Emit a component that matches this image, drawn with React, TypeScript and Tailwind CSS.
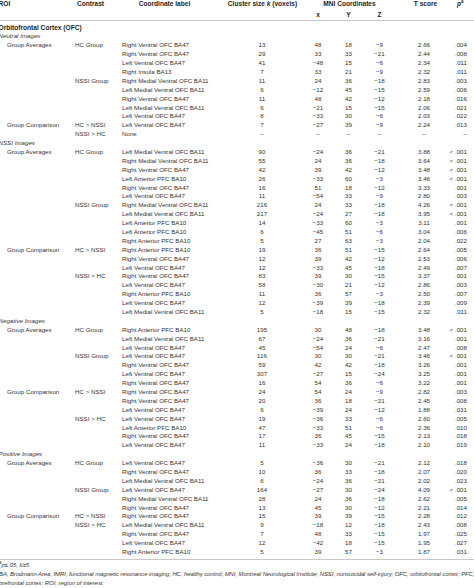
import React from "react";

type R = [string, string, string, string, string, string, string];
type Contrast = { name: string; rows: R[] };
type Group = { roi: string; contrasts: Contrast[] };
type Section = { title: string; groups: Group[] };

const M = "\u2212";

const sections: Section[] = [
  {
    title: "Neutral Images",
    groups: [
      {
        roi: "Group Averages",
        contrasts: [
          {
            name: "HC Group",
            rows: [
              ["Right Ventral OFC BA47", "13", "48", "18", M + "9", "2.66", ".004"],
              ["Right Ventral OFC BA47", "29", "33", "33", M + "21", "2.44", ".008"],
              ["Left Ventral OFC BA47", "41", M + "48", "15", M + "6", "2.34", ".011"],
              ["Right Insula BA13", "7", "33", "21", M + "9", "2.32", ".011"],
            ],
          },
          {
            name: "NSSI Group",
            rows: [
              ["Right Medial Ventral OFC BA11", "11", "24", "36", M + "18", "2.83", ".003"],
              ["Left Medial Ventral OFC BA11", "6", M + "12", "45", M + "15", "2.59", ".006"],
              ["Right Ventral OFC BA47", "11", "48", "42", M + "12", "2.18", ".016"],
              ["Left Medial Ventral OFC BA11", "6", M + "21", "15", M + "15", "2.06", ".021"],
              ["Left Ventral OFC BA47", "8", M + "33", "30", M + "6", "2.03", ".022"],
            ],
          },
        ],
      },
      {
        roi: "Group Comparison",
        contrasts: [
          { name: "HC > NSSI", rows: [["Left Ventral OFC BA47", "7", M + "27", "39", M + "9", "2.24", ".013"]] },
          { name: "NSSI > HC", rows: [["None", "\u2013", "\u2013", "\u2013", "\u2013", "\u2013", "\u2013"]] },
        ],
      },
    ],
  },
  {
    title: "NSSI Images",
    groups: [
      {
        roi: "Group Averages",
        contrasts: [
          {
            name: "HC Group",
            rows: [
              ["Left Medial Ventral OFC BA11", "90", M + "24", "36", M + "21", "3.88", "< .001"],
              ["Right Medial Ventral OFC BA11", "55", "24", "36", M + "18", "3.64", "< .001"],
              ["Right Ventral OFC BA47", "42", "39", "42", M + "12", "3.48", "< .001"],
              ["Left Anterior PFC BA10", "26", M + "33", "60", M + "3", "3.46", "< .001"],
              ["Right Ventral OFC BA47", "16", "51", "18", M + "12", "3.33", ".001"],
              ["Left Ventral OFC BA47", "11", M + "54", "33", M + "9", "2.80", ".003"],
            ],
          },
          {
            name: "NSSI Group",
            rows: [
              ["Right Medial Ventral OFC BA11", "216", "24", "33", M + "18", "4.26", "< .001"],
              ["Left Medial Ventral OFC BA11", "217", M + "24", "27", M + "18", "3.95", "< .001"],
              ["Left Anterior PFC BA10", "14", M + "33", "60", M + "3", "3.11", ".001"],
              ["Left Anterior PFC BA10", "6", M + "45", "51", M + "6", "3.04", ".006"],
              ["Right Anterior PFC BA10", "5", "27", "63", M + "3", "2.04", ".022"],
            ],
          },
        ],
      },
      {
        roi: "Group Comparison",
        contrasts: [
          {
            name: "HC > NSSI",
            rows: [
              ["Right Anterior PFC BA10", "19", "36", "51", M + "15", "2.64", ".005"],
              ["Right Ventral OFC BA47", "12", "39", "42", M + "12", "2.53", ".006"],
              ["Left Ventral OFC BA47", "12", M + "33", "45", M + "18", "2.49", ".007"],
            ],
          },
          {
            name: "NSSI > HC",
            rows: [
              ["Right Ventral OFC BA47", "83", "39", "30", M + "15", "3.37", ".001"],
              ["Left Ventral OFC BA47", "58", M + "30", "21", M + "12", "2.86", ".003"],
              ["Right Anterior PFC BA10", "11", "36", "57", M + "3", "2.50", ".007"],
              ["Left Ventral OFC BA47", "12", M + "39", "39", M + "18", "2.39", ".009"],
              ["Left Medial Ventral OFC BA11", "5", M + "18", "15", M + "15", "2.32", ".011"],
            ],
          },
        ],
      },
    ],
  },
  {
    title: "Negative Images",
    groups: [
      {
        roi: "Group Averages",
        contrasts: [
          {
            name: "HC Group",
            rows: [
              ["Right Anterior PFC BA10", "195", "30", "48", M + "18", "3.48", "< .001"],
              ["Left Medial Ventral OFC BA11", "67", M + "24", "36", M + "21", "3.16", ".001"],
              ["Left Ventral OFC BA47", "45", M + "54", "24", M + "6", "2.47", ".008"],
            ],
          },
          {
            name: "NSSI Group",
            rows: [
              ["Left Ventral OFC BA47", "116", "30", "30", M + "21", "3.46", "< .001"],
              ["Right Ventral OFC BA47", "59", "42", "42", M + "18", "3.26", ".001"],
              ["Left Ventral OFC BA47", "307", M + "27", "15", M + "24", "3.25", ".001"],
              ["Right Ventral OFC BA47", "16", "54", "36", M + "6", "3.22", ".001"],
            ],
          },
        ],
      },
      {
        roi: "Group Comparison",
        contrasts: [
          {
            name: "HC > NSSI",
            rows: [
              ["Right Ventral OFC BA47", "24", "54", "24", M + "9", "2.82", ".003"],
              ["Right Ventral OFC BA47", "20", "36", "18", M + "21", "2.45", ".008"],
              ["Left Ventral OFC BA47", "6", M + "39", "24", M + "12", "1.88", ".031"],
            ],
          },
          {
            name: "NSSI > HC",
            rows: [
              ["Left Ventral OFC BA47", "19", M + "36", "33", M + "6", "2.60", ".005"],
              ["Left Anterior PFC BA10", "47", M + "33", "51", M + "6", "2.36", ".010"],
              ["Right Ventral OFC BA47", "17", "36", "45", M + "15", "2.13", ".018"],
              ["Left Ventral OFC BA47", "11", M + "33", "24", M + "18", "2.10", ".019"],
            ],
          },
        ],
      },
    ],
  },
  {
    title: "Positive Images",
    groups: [
      {
        roi: "Group Averages",
        contrasts: [
          {
            name: "HC Group",
            rows: [
              ["Left Ventral OFC BA47", "5", M + "36", "30", M + "21", "2.12", ".018"],
              ["Right Ventral OFC BA47", "10", "36", "33", M + "18", "2.07", ".020"],
              ["Left Medial Ventral OFC BA11", "6", M + "24", "36", M + "21", "2.02", ".023"],
            ],
          },
          {
            name: "NSSI Group",
            rows: [
              ["Left Ventral OFC BA47", "164", M + "27", "30", M + "24", "4.09", "< .001"],
              ["Right Medial Ventral OFC BA11", "28", "24", "36", M + "18", "2.62", ".005"],
              ["Right Ventral OFC BA47", "13", "45", "30", M + "12", "2.21", ".014"],
            ],
          },
        ],
      },
      {
        roi: "Group Comparison",
        contrasts: [
          { name: "HC > NSSI", rows: [["Right Ventral OFC BA47", "15", "39", "39", M + "15", "2.28", ".012"]] },
          {
            name: "NSSI > HC",
            rows: [
              ["Left Medial Ventral OFC BA11", "9", M + "18", "12", M + "18", "2.43", ".008"],
              ["Right Ventral OFC BA47", "7", "48", "33", M + "15", "1.97", ".025"],
              ["Left Ventral OFC BA47", "12", M + "42", "18", M + "15", "1.95", ".027"],
              ["Right Anterior PFC BA10", "5", "39", "57", M + "3", "1.87", ".031"],
            ],
          },
        ],
      },
    ],
  },
];

function Row({ roi, contrast, r }: { roi: string; contrast: string; r: R }) {
  return (
    <div className="flex h-[8.9px] leading-[8.9px] whitespace-nowrap">
      <div className="w-[75px] pl-[7px]">{roi}</div>
      <div className="w-[47px]">{contrast}</div>
      <div className="w-[108px]">{r[0]}</div>
      <div className="w-[64px] flex justify-center">{r[1]}</div>
      <div className="w-[48px] flex justify-center">{r[2]}</div>
      <div className="w-[13px] flex justify-center">{r[3]}</div>
      <div className="w-[49px] flex justify-center">{r[4]}</div>
      <div className="w-[40px] flex justify-center">{r[5]}</div>
      <div className="w-[23px] flex justify-end">{r[6]}</div>
    </div>
  );
}

export default function App() {
  const body: React.ReactNode[] = [];
  sections.forEach((s, si) => {
    body.push(
      <div key={"s" + si} className="h-[8.9px] leading-[8.9px] italic -ml-[1.5px] whitespace-nowrap">
        {s.title}
      </div>
    );
    s.groups.forEach((g, gi) => {
      let firstG = true;
      g.contrasts.forEach((c, ci) => {
        c.rows.forEach((r, ri) => {
          body.push(
            <Row
              key={`r${si}-${gi}-${ci}-${ri}`}
              roi={firstG ? g.roi : ""}
              contrast={ri === 0 ? c.name : ""}
              r={r}
            />
          );
          firstG = false;
        });
      });
    });
  });

  return (
    <div className="w-[474px] h-[588px] overflow-hidden bg-white font-['Liberation_Sans',Arial,sans-serif] text-[6.2px] text-[#333]">
      {/* header */}
      <div className="-mt-[1.5px] pb-[1px] border-b border-[#c9c9c9] font-bold text-[6.6px] text-[#1e1e1e]">
        <div className="flex h-[9px] leading-[9px] whitespace-nowrap">
          <div className="w-[60px] -ml-[1.5px]">ROI</div>
          <div className="w-[64px] flex justify-center">Contrast</div>
          <div className="w-[84px] flex justify-center">Coordinate label</div>
          <div className="w-[112px] flex justify-center">
            <span>
              Cluster size <span className="italic">k</span> (voxels)
            </span>
          </div>
          <div className="w-[62px] flex justify-center">MNI Coordinates</div>
          <div className="w-[34px] ml-[28px] flex justify-center">T score</div>
          <div className="w-[23px] flex justify-end pr-[2px]">
            <span>
              <span className="italic">p</span>
              <span className="text-[4.5px] align-super leading-none">a</span>
            </span>
          </div>
        </div>
        <div className="flex h-[9px] leading-[9px] mt-[2px]">
          <div className="w-[294px]" />
          <div className="w-[48px] flex justify-center">x</div>
          <div className="w-[13px] flex justify-center">Y</div>
          <div className="w-[49px] flex justify-center">Z</div>
        </div>
      </div>

      {/* body */}
      <div className="mt-[3px] pb-[2px] border-b border-[#c9c9c9]">
        <div className="h-[8.9px] leading-[8.9px] font-bold text-[6.6px] text-[#1e1e1e] -ml-[1.5px] whitespace-nowrap">
          Orbitofrontal Cortex (OFC)
        </div>
        {body}
      </div>

      {/* footnotes */}
      <div className="mt-[1px] italic text-[#333] text-[5.9px] whitespace-nowrap">
        <div className="h-[9px] leading-[9px] -ml-[1px]">
          <span className="text-[4.5px] align-super leading-none">a</span>p≤.05, k≥5.
        </div>
        <div className="h-[9px] leading-[9px] -ml-[1px] tracking-[-0.05px]">
          BA, Brodmann Area; fMRI, functional magnetic resonance imaging; HC, healthy control; MNI, Montreal
          Neurological Institute; NSSI, nonsuicidal self-injury; OFC, orbitofrontal cortex; PFC,
        </div>
        <div className="h-[9px] leading-[9px] -ml-[1px]">prefrontal cortex; ROI, region of interest.</div>
      </div>
    </div>
  );
}
